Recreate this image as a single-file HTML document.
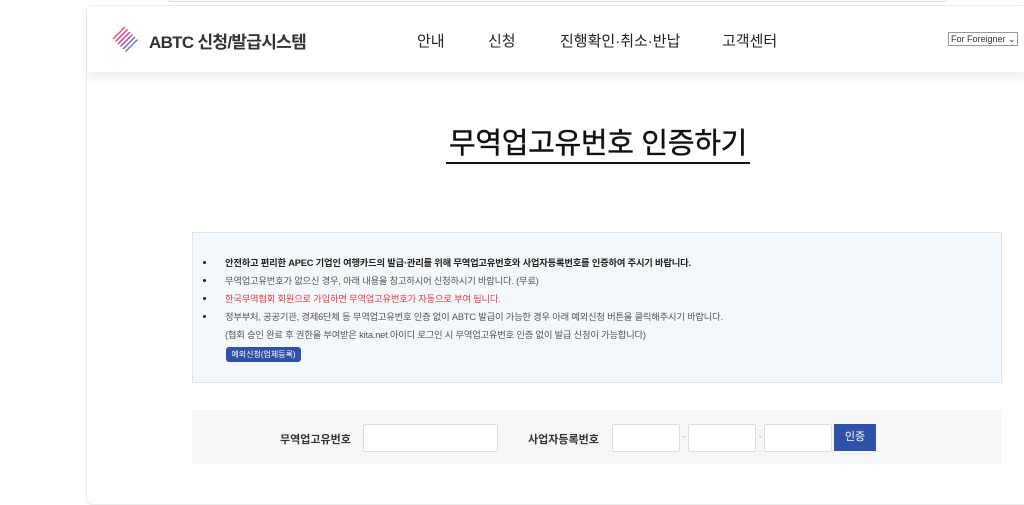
<!DOCTYPE html>
<html><head><meta charset="utf-8">
<style>
*{margin:0;padding:0;box-sizing:border-box}
body{width:1024px;height:492px;overflow:hidden;background:#fff;font-family:"Liberation Sans","Noto Sans CJK KR",sans-serif;position:relative;color:#222}
.card{position:absolute;left:86px;top:5px;width:945px;height:500px;border:1px solid #ececec;border-radius:6px;background:#fff}
.hdr{position:absolute;left:87px;top:6px;width:940px;height:66px;background:#fff;box-shadow:0 6px 10px rgba(0,0,0,0.06);border-radius:6px 0 0 0}
.topline{position:absolute;left:168px;top:0;width:778px;height:2px;border:1px solid #ddd;border-top:none;border-radius:0 0 4px 4px}
.logo{position:absolute;left:112px;top:25px}
.brand{position:absolute;left:149px;top:28px;font-size:17px;font-weight:bold;color:#333;letter-spacing:-0.7px}
.nav{position:absolute;top:30px;font-size:15px;color:#222}
.sel{position:absolute;left:948px;top:32px;width:70px;height:14px;border:1px solid #999;font-size:9px;line-height:12px;padding-left:2px;color:#333;background:#fff;white-space:nowrap;overflow:hidden}
.title{position:absolute;left:0;width:1196px;text-align:center;top:120px;font-size:29px;color:#111;letter-spacing:-0.3px;-webkit-text-stroke:0.4px #111}
.uline{position:absolute;left:446px;top:162px;width:304px;height:2px;background:#111}
.info{position:absolute;left:192px;top:232px;width:810px;height:151px;background:#f4f7fb;border:1px solid #dfe4ea}
.info ul{position:absolute;left:32px;top:21px;list-style:none;font-size:9.3px;color:#555;letter-spacing:-0.2px}
.info li{height:18px;line-height:18px;position:relative;white-space:nowrap}
.info li.b:before{content:"";position:absolute;left:-22px;top:7px;width:3px;height:3px;border-radius:50%;background:#222}
.btn{position:absolute;left:226px;top:347px;width:75px;height:15px;background:#2f52a8;border-radius:3px;color:#fff;font-size:8px;line-height:15px;text-align:center}
.form{position:absolute;left:192px;top:410px;width:809px;height:54px;background:#f6f6f6}
.lbl{position:absolute;top:431px;font-size:11px;font-weight:bold;color:#333}
.inp{position:absolute;top:424px;height:28px;background:#fff;border:1px solid #ddd;border-radius:2px}
.dash{position:absolute;top:432px;font-size:8px;color:#888}
.ok{position:absolute;left:834px;top:424px;width:42px;height:27px;background:#2f52a8;color:#fff;font-size:11px;line-height:27px;text-align:center}
</style></head><body>
<div class="topline"></div>
<div class="card"></div>
<div class="hdr"></div>
<svg class="logo" width="32" height="28" viewBox="0 0 32 28">
<defs><linearGradient id="g" gradientUnits="userSpaceOnUse" x1="2" y1="2" x2="28" y2="26"><stop offset="0" stop-color="#f7941d"/><stop offset="0.35" stop-color="#e8308a"/><stop offset="0.6" stop-color="#7b5fc7"/><stop offset="1" stop-color="#1fb5c9"/></linearGradient></defs>
<g stroke="url(#g)" stroke-width="1.5">
<line x1="1" y1="14" x2="13" y2="2"/><line x1="3.5" y1="16.5" x2="15.5" y2="4.5"/><line x1="6" y1="19" x2="18" y2="7"/><line x1="8.5" y1="21.5" x2="20.5" y2="9.5"/><line x1="11" y1="24" x2="23" y2="12"/><line x1="13.5" y1="26.5" x2="25.5" y2="14.5"/>
</g></svg>
<div class="brand">ABTC 신청/발급시스템</div>
<div class="nav" style="left:417px">안내</div>
<div class="nav" style="left:488px">신청</div>
<div class="nav" style="left:560px">진행확인·취소·반납</div>
<div class="nav" style="left:722px">고객센터</div>
<div class="sel">For Foreigner ⌄</div>
<div class="title">무역업고유번호 인증하기</div>
<div class="uline"></div>
<div class="info"><ul>
<li class="b" style="color:#222;font-weight:bold">안전하고 편리한 APEC 기업인 여행카드의 발급·관리를 위해 무역업고유번호와 사업자등록번호를 인증하여 주시기 바랍니다.</li>
<li class="b">무역업고유번호가 없으신 경우, 아래 내용을 참고하시어 신청하시기 바랍니다. (무료)</li>
<li class="b" style="color:#e0403c">한국무역협회 회원으로 가입하면 무역업고유번호가 자동으로 부여 됩니다.</li>
<li class="b">정부부처, 공공기관, 경제6단체 등 무역업고유번호 인증 없이 ABTC 발급이 가능한 경우 아래 예외신청 버튼을 클릭해주시기 바랍니다.</li>
<li>(협회 승인 완료 후 권한을 부여받은 kita.net 아이디 로그인 시 무역업고유번호 인증 없이 발급 신청이 가능합니다)</li>
</ul></div>
<div class="btn">예외신청(업체등록)</div>
<div class="form"></div>
<div class="lbl" style="left:280px">무역업고유번호</div>
<div class="inp" style="left:363px;width:135px"></div>
<div class="lbl" style="left:528px">사업자등록번호</div>
<div class="inp" style="left:612px;width:68px"></div>
<div class="dash" style="left:683px">-</div>
<div class="inp" style="left:688px;width:68px"></div>
<div class="dash" style="left:759px">-</div>
<div class="inp" style="left:764px;width:68px"></div>
<div class="ok">인증</div>
</body></html>
